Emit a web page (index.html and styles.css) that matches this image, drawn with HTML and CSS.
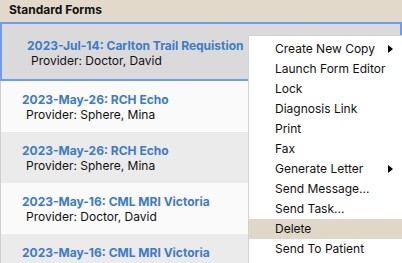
FILE: index.html
```html
<!DOCTYPE html>
<html>
<head>
<meta charset="utf-8">
<link rel="stylesheet" href="styles.css">
</head>
<body>
<div class="page">
  <div class="header">Standard Forms</div>
  <div class="list">
    <div class="row selected">
      <div class="title">2023-Jul-14: Carlton Trail Requistion</div>
      <div class="provider">Provider: Doctor, David</div>
    </div>
    <div class="row">
      <div class="title">2023-May-26: RCH Echo</div>
      <div class="provider">Provider: Sphere, Mina</div>
    </div>
    <div class="row alt">
      <div class="title">2023-May-26: RCH Echo</div>
      <div class="provider">Provider: Sphere, Mina</div>
    </div>
    <div class="row">
      <div class="title">2023-May-16: CML MRI Victoria</div>
      <div class="provider">Provider: Doctor, David</div>
    </div>
    <div class="row alt">
      <div class="title">2023-May-16: CML MRI Victoria</div>
    </div>
  </div>
  <div class="menu">
    <div class="item sub">Create New Copy</div>
    <div class="item">Launch Form Editor</div>
    <div class="item">Lock</div>
    <div class="item">Diagnosis Link</div>
    <div class="item">Print</div>
    <div class="item">Fax</div>
    <div class="item sub">Generate Letter</div>
    <div class="item">Send Message...</div>
    <div class="item">Send Task...</div>
    <div class="item active">Delete</div>
    <div class="item">Send To Patient</div>
  </div>
</div>
</body>
</html>
```
FILE: styles.css
```css
html, body {
  margin: 0;
  padding: 0;
  background: #ffffff;
}
.page {
  position: relative;
  width: 402px;
  height: 263px;
  overflow: hidden;
  font-family: Inter, "Noto Sans", sans-serif;
  font-size: 12px;
  color: #111111;
}
.header {
  height: 22px;
  box-sizing: border-box;
  background: #e2d9cb;
  font-weight: 700;
  line-height: 20px;
  padding-left: 9px;
}
.list {
  border-left: 1px solid #cfcfcf;
}
.row {
  height: 51px;
  box-sizing: border-box;
  padding: 11px 0 0 21px;
  background: #fafafa;
}
.row.alt {
  background: #ebebeb;
}
.row.selected {
  height: 59px;
  background: #dadada;
  border: 2px solid #6d9cf2;
  margin-left: -1px;
  padding: 14px 0 0 25px;
}
.title {
  color: #3b7bcb;
  font-weight: 700;
  line-height: 15px;
  white-space: nowrap;
}
.provider {
  line-height: 15px;
  padding-left: 4px;
  white-space: nowrap;
}
.menu {
  position: absolute;
  left: 248px;
  top: 35px;
  width: 160px;
  height: 240px;
  box-sizing: border-box;
  background: #ffffff;
  border: 1px solid #d2d2d2;
  padding-top: 3px;
}
.item {
  position: relative;
  height: 20px;
  line-height: 20px;
  padding-left: 26px;
  white-space: nowrap;
}
.item.active {
  background: #e0d7c9;
}
.item.sub::after {
  content: "";
  position: absolute;
  left: 139px;
  top: 6px;
  width: 0;
  height: 0;
  border-top: 4px solid transparent;
  border-bottom: 4px solid transparent;
  border-left: 5px solid #000000;
}
```
